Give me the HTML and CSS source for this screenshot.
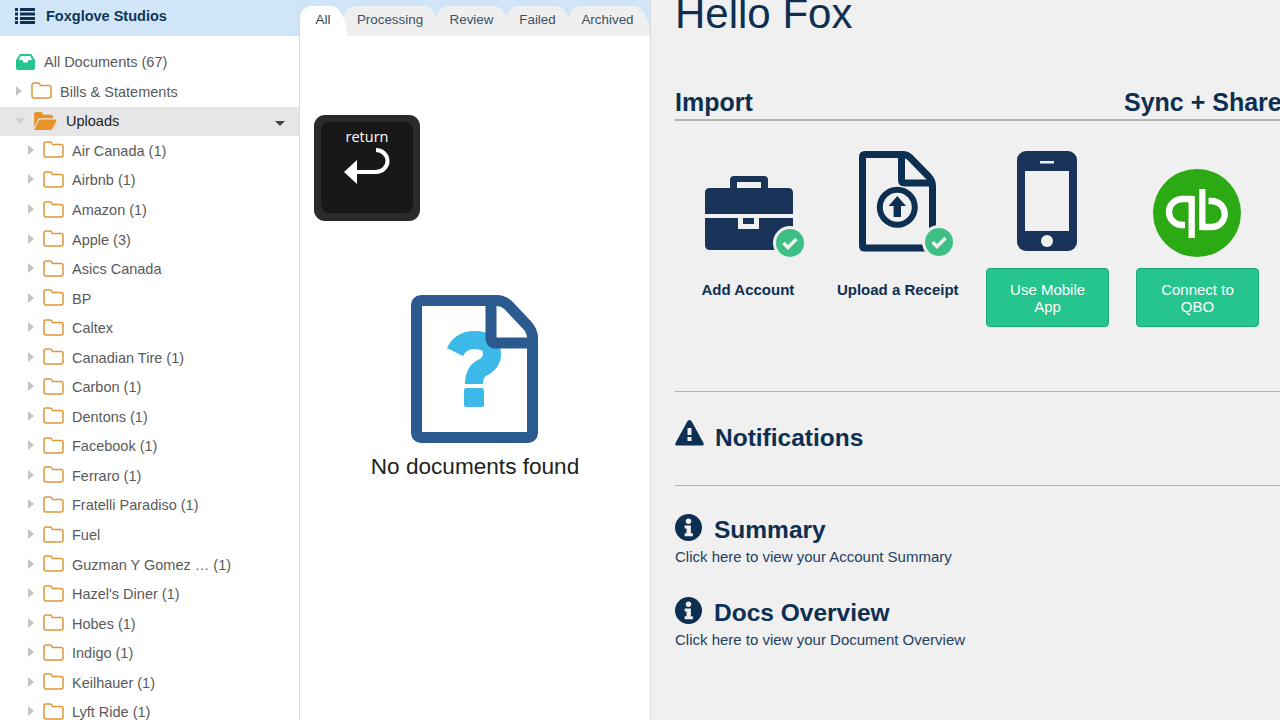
FILE: index.html
```html
<!DOCTYPE html>
<html lang="en">
<head>
  <meta charset="UTF-8">
  <title>Foxglove Studios</title>
  <link rel="stylesheet" href="styles.css">
</head>
<body>
  <svg class="defs" aria-hidden="true">
    <symbol id="folder" viewBox="0 0 21 17">
      <path d="M1 3 Q1 1 3 1 H7 Q8.5 1 9 2.5 L9.4 3.5 H18 Q20 3.5 20 5.5 V14 Q20 16 18 16 H3 Q1 16 1 14 Z" fill="none" stroke="#e0973a" stroke-width="1.5"/>
    </symbol>
    <symbol id="info" viewBox="0 0 28 28">
      <circle cx="14" cy="14" r="14" fill="#0d2f52"/>
      <circle cx="14" cy="7.5" r="2.8" fill="#f0f0f0"/>
      <path d="M10 12 H16.5 V20 H18.5 V23 H10 V20 H12 V15 H10 Z" fill="#f0f0f0"/>
    </symbol>
  </svg>

  <aside class="sidebar">
    <div class="side-head">
      <svg class="list-icon" width="20" height="16" viewBox="0 0 20 16" fill="#0d2f52">
        <rect x="0" y="0" width="3" height="3"/><rect x="5" y="0" width="15" height="3"/>
        <rect x="0" y="4.5" width="3" height="3"/><rect x="5" y="4.5" width="15" height="3"/>
        <rect x="0" y="9" width="3" height="3"/><rect x="5" y="9" width="15" height="3"/>
        <rect x="0" y="13" width="3" height="3"/><rect x="5" y="13" width="15" height="3"/>
      </svg>
      <span>Foxglove Studios</span>
    </div>
    <ul class="tree">
      <li class="row all">
        <svg class="inbox" width="19" height="16" viewBox="0 0 19 16">
          <path d="M4 0 H15 L19 6 V14 Q19 16 17 16 H2 Q0 16 0 14 V6 Z" fill="#26c48f"/>
          <path d="M4.8 2 H14.2 L16.5 6 H12.5 L11.5 8.5 H7.5 L6.5 6 H2.5 Z" fill="#fff"/>
        </svg>
        All Documents (67)
      </li>
      <li class="row top"><i class="caret"></i><svg class="folder"><use href="#folder"/></svg>Bills &amp; Statements</li>
      <li class="row open">
        <i class="caret-down"></i>
        <svg class="folder-open" width="23" height="18" viewBox="0 0 24 19">
          <path d="M0 2 Q0 0 2 0 H7 Q8.5 0 9 1.5 L9.5 3 H18 Q20 3 20 5 V6.5 H6 Q4.5 6.5 4 8 L0 16 Z" fill="#e8922a"/>
          <path d="M6.5 8 H23 Q24 8 23.6 9 L19.5 17.5 Q19 19 17.5 19 H1 Q0 19 .4 18 L5 9 Q5.5 8 6.5 8 Z" fill="#e8922a"/>
        </svg>
        Uploads
        <i class="menu-down"></i>
      </li>
      <li class="row sub"><i class="caret"></i><svg class="folder"><use href="#folder"/></svg>Air Canada (1)</li>
      <li class="row sub"><i class="caret"></i><svg class="folder"><use href="#folder"/></svg>Airbnb (1)</li>
      <li class="row sub"><i class="caret"></i><svg class="folder"><use href="#folder"/></svg>Amazon (1)</li>
      <li class="row sub"><i class="caret"></i><svg class="folder"><use href="#folder"/></svg>Apple (3)</li>
      <li class="row sub"><i class="caret"></i><svg class="folder"><use href="#folder"/></svg>Asics Canada</li>
      <li class="row sub"><i class="caret"></i><svg class="folder"><use href="#folder"/></svg>BP</li>
      <li class="row sub"><i class="caret"></i><svg class="folder"><use href="#folder"/></svg>Caltex</li>
      <li class="row sub"><i class="caret"></i><svg class="folder"><use href="#folder"/></svg>Canadian Tire (1)</li>
      <li class="row sub"><i class="caret"></i><svg class="folder"><use href="#folder"/></svg>Carbon (1)</li>
      <li class="row sub"><i class="caret"></i><svg class="folder"><use href="#folder"/></svg>Dentons (1)</li>
      <li class="row sub"><i class="caret"></i><svg class="folder"><use href="#folder"/></svg>Facebook (1)</li>
      <li class="row sub"><i class="caret"></i><svg class="folder"><use href="#folder"/></svg>Ferraro (1)</li>
      <li class="row sub"><i class="caret"></i><svg class="folder"><use href="#folder"/></svg>Fratelli Paradiso (1)</li>
      <li class="row sub"><i class="caret"></i><svg class="folder"><use href="#folder"/></svg>Fuel</li>
      <li class="row sub"><i class="caret"></i><svg class="folder"><use href="#folder"/></svg>Guzman Y Gomez … (1)</li>
      <li class="row sub"><i class="caret"></i><svg class="folder"><use href="#folder"/></svg>Hazel's Diner (1)</li>
      <li class="row sub"><i class="caret"></i><svg class="folder"><use href="#folder"/></svg>Hobes (1)</li>
      <li class="row sub"><i class="caret"></i><svg class="folder"><use href="#folder"/></svg>Indigo (1)</li>
      <li class="row sub"><i class="caret"></i><svg class="folder"><use href="#folder"/></svg>Keilhauer (1)</li>
      <li class="row sub"><i class="caret"></i><svg class="folder"><use href="#folder"/></svg>Lyft Ride (1)</li>
    </ul>
  </aside>

  <main class="docs">
    <nav class="tabs">
      <a class="tab active t-all">All</a>
      <a class="tab t-proc">Processing</a>
      <a class="tab t-rev">Review</a>
      <a class="tab t-fail">Failed</a>
      <a class="tab t-arch">Archived</a>
    </nav>
    <div class="docs-body">
      <div class="return-key">
        <div class="key-top">
          <span>return</span>
          <svg width="48" height="38" viewBox="0 0 48 38">
            <path d="M33 3 A11.5 11 0 0 1 33 25 H12" fill="none" stroke="#fff" stroke-width="4"/>
            <path d="M1 25 L14 13 V37 Z" fill="#fff"/>
          </svg>
        </div>
      </div>
      <div class="empty">
        <svg width="127" height="148" viewBox="0 0 127 148">
          <path d="M44 57 Q50 45 63 45 Q81 45 81 59 Q81 68 71 73 Q63 77 63 89" fill="none" stroke="#3cb9e8" stroke-width="18"/>
          <rect x="53" y="93" width="20" height="19" rx="2.5" fill="#3cb9e8"/>
          <path d="M11 5.5 H86 Q92 5.5 97 10 L116 30 Q121.5 36 121.5 43 V137 Q121.5 142.5 116 142.5 H11 Q5.5 142.5 5.5 137 V11 Q5.5 5.5 11 5.5 Z" fill="none" stroke="#2b5a8e" stroke-width="11"/>
          <path d="M80 5.5 V43 Q80 48 85 48 H121" fill="none" stroke="#2b5a8e" stroke-width="11"/>
        </svg>
        <p>No documents found</p>
      </div>
    </div>
  </main>

  <section class="dash">
    <h1>Hello Fox</h1>
    <div class="import-head">
      <h2>Import</h2>
      <h2>Sync + Share</h2>
    </div>
    <div class="tiles">
      <div class="tile">
        <div class="tile-icon">
          <svg class="ic-case" width="100" height="81" viewBox="0 0 100 81">
            <path d="M25 12 V4 Q25 0 29 0 H59 Q63 0 63 4 V12 H56 V6 H32 V12 Z" fill="#1a3358"/>
            <path d="M5 12 H83 Q88 12 88 17 V38 H0 V17 Q0 12 5 12 Z" fill="#1a3358"/>
            <path d="M0 42 H33 V53 H54 V42 H88 V74 H5 Q0 74 0 69 Z" fill="#1a3358"/>
            <rect x="38" y="42" width="11" height="6" fill="#1a3358"/>
            <circle cx="85" cy="67" r="17" fill="#f0f0f0"/>
            <circle cx="85" cy="67" r="14" fill="#3ebf85"/>
            <path d="M78.5 67 L83 71.5 L91.5 63" fill="none" stroke="#f0f0f0" stroke-width="3.5"/>
          </svg>
        </div>
        <div class="tile-label">Add Account</div>
      </div>
      <div class="tile">
        <div class="tile-icon">
          <svg class="ic-file" width="95" height="106" viewBox="0 0 95 106">
            <path d="M6 3.5 H44 Q48 3.5 51 6.5 L70 26 Q73.5 30 73.5 35 V95 Q73.5 97 71 97 H6 Q3.5 97 3.5 95 V6 Q3.5 3.5 6 3.5 Z" fill="none" stroke="#0d2f52" stroke-width="7"/>
            <path d="M42.5 3.5 V29 Q42.5 32 45.5 32 H73" fill="none" stroke="#0d2f52" stroke-width="7"/>
            <circle cx="38.3" cy="56.3" r="17.5" fill="none" stroke="#0d2f52" stroke-width="6"/>
            <path d="M38.3 45 L47 55 H42 V66 H34.6 V55 H29.6 Z" fill="#0d2f52"/>
            <circle cx="80" cy="91" r="17" fill="#f0f0f0"/>
            <circle cx="80" cy="91" r="14" fill="#3ebf85"/>
            <path d="M73.5 91 L78 95.5 L86.5 87" fill="none" stroke="#f0f0f0" stroke-width="3.5"/>
          </svg>
        </div>
        <div class="tile-label">Upload a Receipt</div>
      </div>
      <div class="tile">
        <div class="tile-icon">
          <svg class="ic-phone" width="60" height="100" viewBox="0 0 60 100">
            <rect width="60" height="100" rx="9" fill="#1a3358"/>
            <rect x="8" y="20" width="44" height="60" fill="#f0f0f0"/>
            <rect x="23" y="10" width="14" height="2.5" fill="#f0f0f0"/>
            <circle cx="30" cy="90" r="6" fill="#f0f0f0"/>
          </svg>
        </div>
        <button class="tile-btn">Use Mobile App</button>
      </div>
      <div class="tile">
        <div class="tile-icon">
          <svg class="ic-qb" width="88" height="88" viewBox="0 0 88 88">
            <circle cx="44" cy="44" r="44" fill="#2caa14"/>
            <path d="M32 56 H29 A13 13 0 0 1 29 30 H38.7 M38.7 27 V69" fill="none" stroke="#fff" stroke-width="6.3"/>
            <path d="M55.5 32 H58.7 A13 13 0 0 1 58.7 58 H49.3 M49.3 20 V61" fill="none" stroke="#fff" stroke-width="6.3"/>
          </svg>
        </div>
        <button class="tile-btn">Connect to QBO</button>
      </div>
    </div>
    <div class="block notif">
      <div class="block-head">
        <svg class="warn" width="29" height="26" viewBox="0 0 29 26">
          <path d="M14.5 0 Q16 0 17 2 L28.5 23 Q29.5 25.5 27 25.5 H2 Q-.5 25.5 .5 23 L12 2 Q13 0 14.5 0 Z" fill="#0d2f52"/>
          <rect x="12.5" y="8" width="4" height="7" fill="#f0f0f0"/>
          <rect x="12.5" y="17" width="4" height="4" fill="#f0f0f0"/>
        </svg>
        <h2>Notifications</h2>
      </div>
    </div>
    <div class="block summary">
      <div class="block-head">
        <svg class="info" width="27" height="27"><use href="#info"/></svg>
        <h2>Summary</h2>
      </div>
      <p>Click here to view your Account Summary</p>
    </div>
    <div class="block overview">
      <div class="block-head">
        <svg class="info" width="27" height="27"><use href="#info"/></svg>
        <h2>Docs Overview</h2>
      </div>
      <p>Click here to view your Document Overview</p>
    </div>
  </section>
</body>
</html>
```
FILE: styles.css
```css
* { box-sizing: border-box; }

html, body {
  height: 720px;
  overflow: hidden;
}

body {
  margin: 0;
  display: flex;
  font-family: "Liberation Sans", Arial, sans-serif;
  background: #f0f0f0;
}

.defs { display: none; }

/* left column */
.sidebar {
  width: 300px;
  height: 720px;
  flex: none;
  overflow: hidden;
  background: #fff;
  border-right: 1px solid #dcdcdc;
}

.side-head {
  height: 36px;
  display: flex;
  align-items: center;
  gap: 11px;
  padding: 0 0 4px 15px;
  background: #d0e5f7;
  color: #0d3559;
  font-size: 14.5px;
  font-weight: bold;
}

.tree {
  list-style: none;
  margin: 0;
  padding: 11.5px 0 0;
}

.row {
  height: 29.55px;
  display: flex;
  align-items: center;
  position: relative;
  font-size: 14.5px;
  color: #5a5a5a;
  white-space: nowrap;
}

.row.all { padding-left: 16px; }
.row.all .inbox { margin-right: 9px; }
.row.top { padding-left: 16px; }
.row.sub { padding-left: 28px; }
.row.open {
  padding-left: 15px;
  background: #e6e6e6;
  color: #222;
}

.caret {
  width: 0;
  height: 0;
  margin-right: 9px;
  border-left: 6px solid #c4c4c4;
  border-top: 5px solid transparent;
  border-bottom: 5px solid transparent;
  position: relative;
  top: -1px;
}

.folder {
  width: 21px;
  height: 17px;
  margin-right: 8px;
  position: relative;
  top: -1px;
}

.caret-down {
  width: 0;
  height: 0;
  margin-right: 9px;
  border-top: 6px solid #cfcfcf;
  border-left: 5.5px solid transparent;
  border-right: 5.5px solid transparent;
}

.folder-open { margin-right: 9px; }

.menu-down {
  position: absolute;
  right: 14px;
  top: 14px;
  width: 0;
  height: 0;
  border-top: 5px solid #444;
  border-left: 5.5px solid transparent;
  border-right: 5.5px solid transparent;
}

/* middle column */
.docs {
  width: 351px;
  height: 720px;
  flex: none;
  background: #fff;
  border-right: 1px solid #dcdcdc;
}

.tabs {
  height: 36px;
  display: flex;
  align-items: flex-end;
  background: #d0e5f7;
}

.tab {
  height: 30px;
  display: flex;
  align-items: center;
  justify-content: center;
  flex: none;
  padding: 0 4px 3px 0;
  font-size: 13.4px;
  color: #3a5068;
  background: #efefef;
  border-radius: 12px 16px 0 0 / 12px 30px 0 0;
  margin-right: -3px;
}

.tab.active {
  padding-right: 1px;
  background: #fff;
  color: #2d4257;
  position: relative;
  z-index: 1;
}

.t-all { width: 47px; }
.t-proc { width: 96px; }
.t-rev { width: 73px; }
.t-fail { width: 65px; }
.t-arch { width: 81px; margin-right: 0; }

.docs-body {
  position: relative;
  height: 684px;
}

.return-key {
  position: absolute;
  left: 14px;
  top: 79px;
  width: 106px;
  height: 106px;
  padding: 7px;
  border-radius: 11px;
  background: #2b2b2b;
}

.key-top {
  height: 91px;
  border-radius: 8px;
  background: #181818;
  display: flex;
  flex-direction: column;
  align-items: center;
  padding-top: 7px;
  color: #fff;
  font-family: "Open Sans", sans-serif;
  font-size: 14.5px;
  line-height: 16px;
}

.key-top svg { margin-top: 2px; }

.empty {
  padding-top: 259px;
  display: flex;
  flex-direction: column;
  align-items: center;
}

.empty svg { margin-left: -1px; }

.empty p {
  margin: 11px 0 0;
  font-size: 22.6px;
  line-height: 26px;
  color: #222;
}

/* right column */
.dash {
  flex: 1;
  min-width: 0;
  height: 720px;
  overflow: hidden;
  padding-left: 24px;
  color: #0d2f52;
}

.dash h1 {
  margin: -6px 0 0;
  font-size: 42px;
  line-height: 40px;
  font-weight: normal;
}

.dash h2 {
  margin: 0;
  font-size: 24.5px;
  line-height: 28px;
  font-weight: bold;
}

.import-head {
  display: grid;
  grid-template-columns: 449px max-content;
  margin-top: 54px;
  padding-bottom: 3px;
  border-bottom: 2px solid #b4b4b4;
  white-space: nowrap;
  height: 33px;
}

.import-head h2 { font-size: 25px; }

.tiles {
  display: flex;
  padding-top: 30px;
  height: 271px;
  border-bottom: 1px solid #b4b4b4;
}

.tile {
  width: 149.85px;
  flex: none;
  display: flex;
  flex-direction: column;
  align-items: center;
}

.tile:first-child { margin-left: -2px; }

.tile-icon {
  height: 100px;
  width: 100%;
  position: relative;
}

.tile-icon svg { position: absolute; }
.ic-case { left: 32px; top: 25px; }
.ic-file { left: 36px; top: 0; }
.ic-phone { left: 44.3px; top: 0; }
.ic-qb { left: 30.5px; top: 18px; }

.tile-label {
  margin-top: 29px;
  font-size: 15px;
  line-height: 20px;
  font-weight: bold;
}

.tile-btn {
  width: 123px;
  height: 59px;
  margin-top: 17px;
  padding: 0 16px;
  border: 1px solid #1ea87a;
  border-radius: 4px;
  background: #26c48f;
  color: #fff;
  font-family: inherit;
  font-size: 15px;
  line-height: 17px;
}

.block-head {
  display: flex;
  align-items: center;
  gap: 12px;
}

.block-head .warn {
  margin: 0 -1px 8px 0;
}

.block-head .info {
  margin-bottom: 5px;
}

.notif {
  height: 94px;
  padding-top: 28px;
  border-bottom: 1px solid #b4b4b4;
}

.notif .block-head h2 { position: relative; top: 1px; }

.summary { padding-top: 28px; }
.overview { padding-top: 31px; }

.block p {
  margin: 2px 0 0;
  font-size: 15px;
  line-height: 18px;
  color: #1f4060;
}
```
